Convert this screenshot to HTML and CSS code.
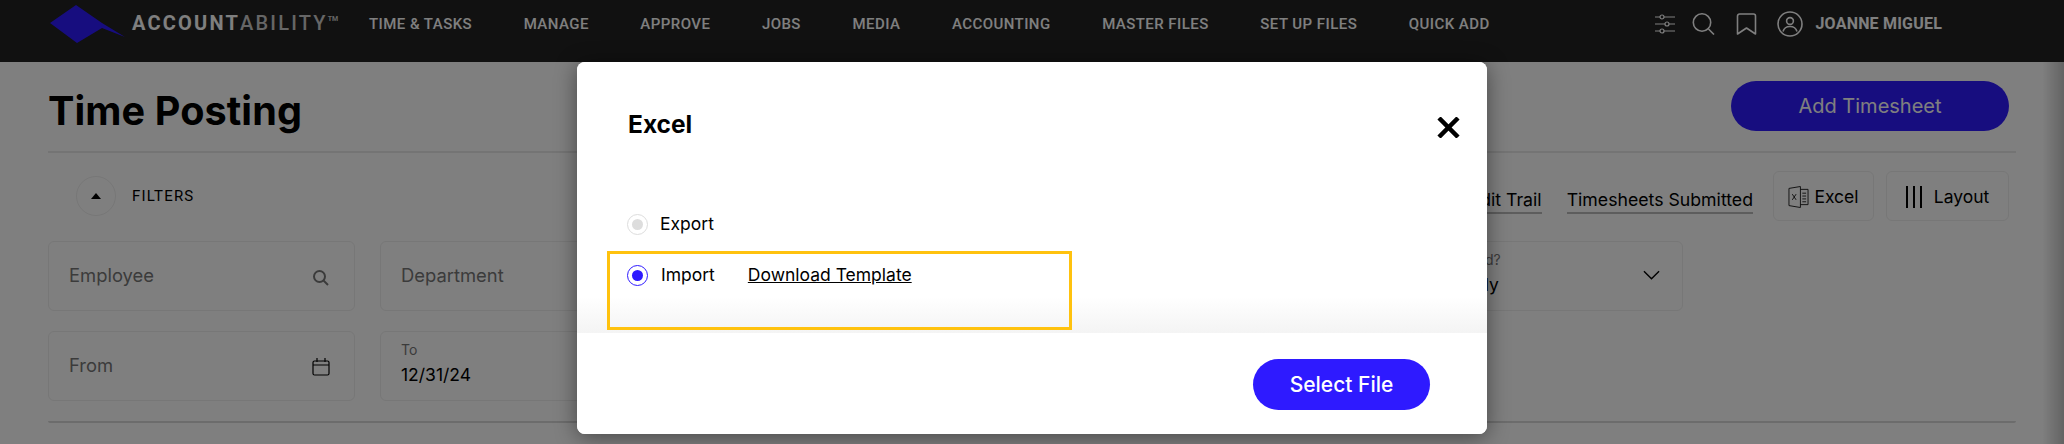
FILE: index.html
```html
<!DOCTYPE html>
<html lang="en">
<head>
<meta charset="utf-8">
<title>Time Posting</title>
<link rel="stylesheet" href="styles.css">
</head>
<body>
<div class="page">
  <header class="topbar">
    <div class="brand">
      <svg class="logo" viewBox="0 0 75 39"><path d="M0 18 26 0 52 18 75 32 52 23 27 38Z" fill="#2e1aff"/></svg>
      <span class="wordmark"><b>ACCOUNT</b><i>ABILITY</i><sup>TM</sup></span>
    </div>
    <nav class="nav">
      <a>TIME &amp; TASKS</a><a>MANAGE</a><a>APPROVE</a><a>JOBS</a><a>MEDIA</a><a>ACCOUNTING</a><a>MASTER FILES</a><a>SET UP FILES</a><a>QUICK ADD</a>
    </nav>
    <div class="tools">
      <svg class="tool t-sliders" viewBox="0 0 20 20" fill="none" stroke="#fff" stroke-width="1.2"><path d="M0 3h5M9 3h11M0 10h10M14 10h6M0 17h5M9 17h11"/><circle cx="7" cy="3" r="2"/><circle cx="12" cy="10" r="2"/><circle cx="7" cy="17" r="2"/></svg>
      <svg class="tool t-search" viewBox="0 0 23 22" fill="none" stroke="#fff" stroke-width="1.6"><circle cx="10" cy="9.5" r="8.7"/><path d="M16.500 16 22 21.500"/></svg>
      <svg class="tool t-mark" viewBox="0 0 21 22" fill="none" stroke="#fff" stroke-width="1.6"><path d="M1.500 3a2 2 0 0 1 2-2h14a2 2 0 0 1 2 2v18l-9-6-9 6Z" stroke-linejoin="round"/></svg>
      <svg class="tool t-user" viewBox="0 0 26 26" fill="none" stroke="#fff" stroke-width="1.6"><circle cx="13" cy="13" r="12"/><circle cx="13" cy="10" r="3.400"/><path d="M6 20.500c1-3.500 3.500-5 7-5s6 1.500 7 5"/></svg>
      <span class="username">JOANNE MIGUEL</span>
    </div>
  </header>

  <main class="content">
    <div class="title-row">
      <h1>Time Posting</h1>
      <button class="btn-add">Add Timesheet</button>
    </div>
    <div class="filter-row">
      <div class="filter-toggle"><span class="circle"><span class="tri"></span></span><span class="filter-label">FILTERS</span></div>
      <div class="actions">
        <a class="link">Audit Trail</a>
        <a class="link">Timesheets Submitted</a>
        <button class="tile tile-excel">
          <svg class="xl" viewBox="0 0 22 24" fill="none" stroke="#222" stroke-width="1"><path d="M1 3 13 1v22L1 21Z"/><path d="M13 4h8v16h-8M15 8h4M15 11h4M15 14h4M15 17h4"/><path d="M4.500 9l4 6M8.500 9l-4 6"/></svg>Excel
        </button>
        <button class="tile tile-layout"><span class="bars"><i></i><i></i><i></i></span>Layout</button>
      </div>
    </div>
    <div class="fields">
      <div class="field"><span class="ph">Employee</span>
        <svg class="f-icon" viewBox="0 0 18 18" fill="none" stroke="#777" stroke-width="2"><circle cx="7.500" cy="7.500" r="5.500"/><path d="M11.500 11.500 16 16"/></svg></div>
      <div class="field"><span class="ph">Department</span></div>
      <div class="field"></div>
      <div class="field"></div>
      <div class="field stacked"><span class="lab">Has Submitted?</span><span class="val">Printed Only</span>
        <svg class="f-chev" viewBox="0 0 18 10" fill="none" stroke="#000" stroke-width="1.500"><path d="M1 1l8 8 8-8"/></svg></div>
      <div class="field"><span class="ph">From</span>
        <svg class="f-icon" viewBox="0 0 18 18" fill="none" stroke="#000" stroke-width="1.200"><rect x="1" y="3" width="16" height="14" rx="1.500"/><path d="M1 7h16M5 0v4M13 0v4"/></svg></div>
      <div class="field stacked"><span class="lab">To</span><span class="val">12/31/24</span></div>
    </div>
    <div class="bottom-rule"></div>
  </main>
</div>

<div class="edge"></div>
<div class="backdrop"></div>

<section class="modal">
  <div class="modal-body">
    <div class="modal-head"><h2>Excel</h2>
      <svg class="close" viewBox="0 0 23 21" fill="none" stroke="#000" stroke-width="4.500"><path d="M2 1 21 20M21 1 2 20"/></svg>
    </div>
    <div class="opt opt-export"><span class="radio off"></span><span>Export</span></div>
    <div class="import-box">
      <div class="opt"><span class="radio on"></span><span class="import-label">Import</span><a class="tpl">Download Template</a></div>
    </div>
  </div>
  <div class="modal-foot"><button class="btn-select">Select File</button></div>
</section>
</body>
</html>
```
FILE: styles.css
```css
* { box-sizing: border-box; }
html, body { margin: 0; padding: 0; }
body { width: 2064px; height: 444px; overflow: hidden; background: #fff; font-family: Inter, Roboto, "Liberation Sans", sans-serif; color: #000; position: relative; }
button { font-family: inherit; cursor: pointer; }

.topbar { height: 62px; background: #222; display: flex; align-items: flex-start; padding: 0 122px 0 50px; font-family: Roboto, sans-serif; }
.brand { display: flex; align-items: flex-start; width: 319px; padding-top: 5px; }
.logo { width: 75px; height: 39px; display: block; }
.wordmark { margin-left: 7px; margin-top: 7px; font-size: 20px; line-height: 22px; letter-spacing: 2.200px; font-weight: 700; color: #fff; white-space: nowrap; }
.wordmark b { font-weight: 700; }
.wordmark i { font-style: normal; font-weight: 500; color: #ccc; }
.wordmark sup { font-size: 7px; letter-spacing: 0; line-height: 0; vertical-align: 9px; color: #ccc; }
.nav { display: flex; gap: 51.500px; padding-top: 15px; }
.nav a { font-size: 15px; line-height: 18px; font-weight: 500; letter-spacing: .45px; color: #fff; white-space: nowrap; }
.tools { display: flex; align-items: flex-start; margin-left: auto; }
.tool { display: block; }
.t-sliders { width: 20px; height: 20px; margin-top: 14px; }
.t-search { width: 23px; height: 22px; margin-top: 13px; margin-left: 17px; }
.t-mark { width: 21px; height: 22px; margin-top: 13px; margin-left: 21px; }
.t-user { width: 26px; height: 26px; margin-top: 11px; margin-left: 20px; }
.username { font-size: 16px; line-height: 18px; font-weight: 700; letter-spacing: .2px; color: #fff; margin-left: 12px; margin-top: 15px; white-space: nowrap; }

.content { padding: 0 48px; }
.title-row { height: 91px; border-bottom: 2px solid #e8e8e8; display: flex; justify-content: space-between; padding: 19px 7px 0 0; }
h1 { margin: 7px 0 0; font-size: 39.600px; line-height: 46px; font-weight: 700; letter-spacing: .1px; }
.btn-add { width: 278px; height: 50px; border: 0; border-radius: 25px; background: #2e1aff; color: #fff; font-size: 20px; }

.filter-row { display: flex; justify-content: space-between; padding: 18px 7px 0 28px; height: 88px; }
.filter-toggle { display: flex; align-items: flex-start; }
.circle { width: 40px; height: 40px; margin-top: 5px; border: 1px solid #eee; border-radius: 50%; display: flex; align-items: center; justify-content: center; }
.tri { width: 0; height: 0; border-left: 5px solid transparent; border-right: 5px solid transparent; border-bottom: 6px solid #000; }
.filter-label { margin-left: 16px; margin-top: 16px; font-family: Roboto, sans-serif; font-size: 15px; line-height: 18px; letter-spacing: 1.200px; }
.actions { display: flex; align-items: flex-start; }
.link { font-size: 17.700px; line-height: 22px; margin-top: 18px; padding-bottom: 1px; border-bottom: 2px solid #bbb; margin-right: 25px; white-space: nowrap; }
.link + .link { margin-right: 20px; }
.tile { height: 50px; background: transparent; border: 1px solid #eee; border-radius: 6px; font-size: 17.500px; display: flex; align-items: center; justify-content: center; color: #000; padding: 1px 0 0; }
.tile-excel { width: 101px; margin-right: 12px; gap: 5px; }
.xl { width: 21px; height: 24px; display: block; }
.tile-layout { width: 123px; gap: 12px; }
.bars { display: flex; gap: 5px; }
.bars i { display: block; width: 2px; height: 22px; background: #000; }

.fields { display: grid; grid-template-columns: repeat(5, 307px); grid-auto-rows: 70px; gap: 20px 25px; }
.field { border: 1px solid #eee; border-radius: 6px; position: relative; padding: 22px 19px 22px 20px; }
.ph { font-size: 18.400px; line-height: 22px; color: #777; display: block; }
.stacked { padding: 9px 19px 0 20px; }
.lab { display: block; font-size: 14px; line-height: 18px; color: #777; }
.val { display: block; font-size: 17.500px; line-height: 24px; margin-top: 4px; }
.f-icon { position: absolute; right: 24px; top: 27px; width: 18px; height: 18px; }
.field:nth-child(6) .f-icon { top: 26px; height: 18px; }
.f-chev { position: absolute; right: 22px; top: 28px; width: 17px; height: 10px; }
.bottom-rule { margin-top: 20px; height: 2px; background: #d8d8d8; border-radius: 0 0 4px 4px; }

.edge { position: absolute; top: 62px; right: 0; bottom: 0; width: 22px; background: linear-gradient(to right, rgba(0,0,0,0), rgba(0,0,0,.22)); }
.backdrop { position: absolute; inset: 0; background: rgba(0,0,0,.5); }

.modal { position: absolute; left: 577px; top: 62px; width: 910px; height: 372px; background: #fff; border-radius: 8px; box-shadow: 0 3px 22px rgba(0,0,0,.45); display: flex; flex-direction: column; overflow: hidden; }
.modal-body { height: 271px; padding: 0 27px 0 30px; background: linear-gradient(to bottom, #fff 0, #fff 235px, #f4f4f4 271px); }
.modal-head { height: 145px; display: flex; justify-content: space-between; align-items: flex-start; padding: 48px 0 0 21px; }
h2 { margin: 0; font-size: 24.500px; line-height: 28px; font-weight: 700; }
.close { width: 23px; height: 21px; margin-top: 7px; display: block; }
.opt { display: flex; align-items: center; font-size: 17.500px; line-height: 22px; padding-left: 20px; }
.opt-export { height: 34px; margin-top: 0; }
.radio { width: 21px; height: 21px; border-radius: 50%; display: flex; align-items: center; justify-content: center; margin-right: 12px; flex: none; }
.radio::after { content: ""; width: 11px; height: 11px; border-radius: 50%; }
.radio.off { border: 1px solid #ddd; }
.radio.off::after { background: #ddd; }
.radio.on { border: 1px solid #2e1aff; }
.radio.on::after { background: #2e1aff; }
.import-box { width: 465px; height: 79px; border: 3px solid #ffc20e; margin-top: 10px; padding-top: 10px; }
.import-box .opt { padding-left: 17px; }
.import-box .radio { margin-right: 13px; }
.import-label { margin-right: 33px; }
.tpl { text-decoration: underline; }
.modal-foot { flex: 1; background: #fff; display: flex; justify-content: flex-end; padding: 26px 57px 0 0; }
.btn-select { width: 177px; height: 51px; border: 0; border-radius: 26px; background: #2e1aff; color: #fff; font-size: 21px; font-weight: 500; }
```
